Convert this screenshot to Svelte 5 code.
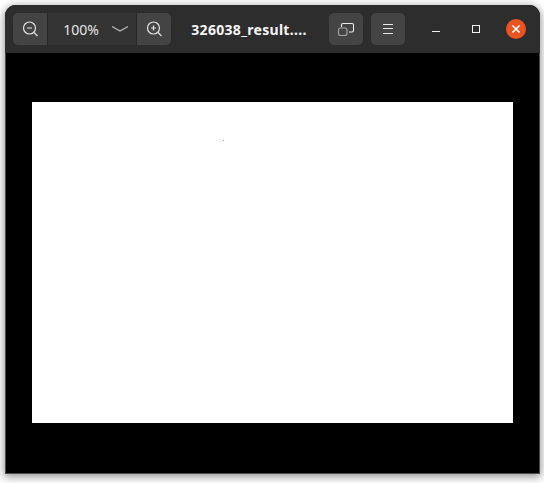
<script>
  const title = '326038_result....';
</script>

<div class="page">
  <div class="window">
    <header class="bar">
      <div class="zoom-group">
        <button class="seg end" aria-label="Zoom out">
          <svg width="18" height="18" viewBox="0 0 18 18" fill="none" stroke="#e4e4e4" stroke-width="1.2">
            <circle cx="8.500" cy="8" r="6" />
            <path d="M13 12.500 16.500 16M6 8h5" />
          </svg>
        </button>
        <button class="seg mid">
          <span class="pct">100%</span>
          <svg width="18" height="8" viewBox="0 0 18 8" fill="none" stroke="#bdbdbd" stroke-width="1.1">
            <path d="M1 1.500 9 6l8-4.500" />
          </svg>
        </button>
        <button class="seg end" aria-label="Zoom in">
          <svg width="18" height="18" viewBox="0 0 18 18" fill="none" stroke="#e4e4e4" stroke-width="1.2">
            <circle cx="8.500" cy="8" r="6" />
            <path d="M13 12.500 16.500 16M6 8h5M8.500 5.500v5" />
          </svg>
        </button>
      </div>

      <div class="title">{title}</div>

      <div class="actions">
        <button class="tool" aria-label="Restore view">
          <svg width="18" height="14" viewBox="0 0 18 14" fill="none" stroke-width="1.1">
            <path d="M4.500 5V3A1.500 1.500 0 0 1 6 1.500h9A1.500 1.500 0 0 1 16.500 3v5.500A1.500 1.500 0 0 1 15 10h-3" stroke="#ececec" />
            <rect x="1.500" y="6" width="8.500" height="7.500" rx="2" stroke="#a8a8a8" />
          </svg>
        </button>
        <button class="tool" aria-label="Menu">
          <svg width="12" height="10" viewBox="0 0 12 10" stroke="#e8e8e8" stroke-width="1">
            <path d="M1 .5h10M1 4.500h10M1 9.500h10" />
          </svg>
        </button>
      </div>

      <div class="controls">
        <button class="ctl" aria-label="Minimize"><span class="min"></span></button>
        <button class="ctl" aria-label="Maximize"><span class="max"></span></button>
        <button class="ctl" aria-label="Close">
          <span class="close">
            <svg width="10" height="10" viewBox="0 0 10 10" stroke="#fff" stroke-width="1.700">
              <path d="M1.500 1.500l7 7M8.500 1.500l-7 7" />
            </svg>
          </span>
        </button>
      </div>
    </header>

    <main class="viewer">
      <div class="image"><span class="speck"></span></div>
    </main>
  </div>
</div>

<style>
  :global(body) {
    margin: 0;
    background: #fff;
  }
  .page {
    width: 544px;
    height: 483px;
    padding: 5px 4px 9px 5px;
    box-sizing: border-box;
    overflow: hidden;
  }
  .window {
    width: 535px;
    height: 469px;
    display: flex;
    flex-direction: column;
    border-radius: 11px 11px 0 0;
    background: #000;
    box-shadow: 0 2px 9px 1px rgba(0, 0, 0, 0.42);
  }
  .bar {
    height: 48px;
    flex: none;
    box-sizing: border-box;
    background: #2d2d2d;
    border-radius: 11px 11px 0 0;
    display: flex;
    align-items: center;
    padding-left: 8px;
    font-family: 'Noto Sans', sans-serif;
    color: #f2f2f2;
  }
  button {
    border: 0;
    padding: 0;
    margin: 0;
    background: none;
    color: inherit;
    font: inherit;
    display: flex;
    align-items: center;
    justify-content: center;
  }
  .zoom-group {
    display: flex;
    height: 32px;
    width: 158px;
    border-radius: 5px;
    overflow: hidden;
    background: #333;
  }
  .seg.end {
    width: 34px;
    background: #444;
  }
  .seg.mid {
    width: 90px;
    background: #343434;
    border-left: 1px solid #262626;
    border-right: 1px solid #262626;
    box-sizing: border-box;
    gap: 12px;
    padding-left: 8px;
  }
  .pct {
    font-size: 14px;
    color: #e6e6e6;
  }
  .title {
    width: 158px;
    flex: none;
    box-sizing: border-box;
    padding-right: 2px;
    text-align: center;
    font-size: 14px;
    font-weight: 700;
    letter-spacing: 0.3px;
    white-space: nowrap;
    color: #f6f6f6;
  }
  .actions {
    display: flex;
    gap: 8px;
    flex: none;
  }
  .tool {
    width: 34px;
    height: 32px;
    border-radius: 5px;
    background: #444;
  }
  .controls {
    display: flex;
    margin-left: 11px;
  }
  .ctl {
    width: 40px;
    height: 32px;
  }
  .min {
    display: block;
    width: 8px;
    height: 1px;
    margin-top: 5px;
    background: #f0f0f0;
  }
  .max {
    display: block;
    width: 6px;
    height: 6px;
    border: 1px solid #f0f0f0;
  }
  .close {
    width: 20px;
    height: 20px;
    border-radius: 50%;
    background: #e95420;
    display: flex;
    align-items: center;
    justify-content: center;
  }
  .viewer {
    flex: 1;
    min-height: 0;
    padding: 49px 26px 50px 26px;
    background: #000;
    border: 1px solid #4a4a4a;
    border-top: 0;
  }
  .image {
    position: relative;
    width: 481px;
    height: 321px;
    background: #fff;
  }
  .speck {
    position: absolute;
    left: 191px;
    top: 38px;
    width: 1px;
    height: 1px;
    background: #9a9a9a;
  }
</style>
